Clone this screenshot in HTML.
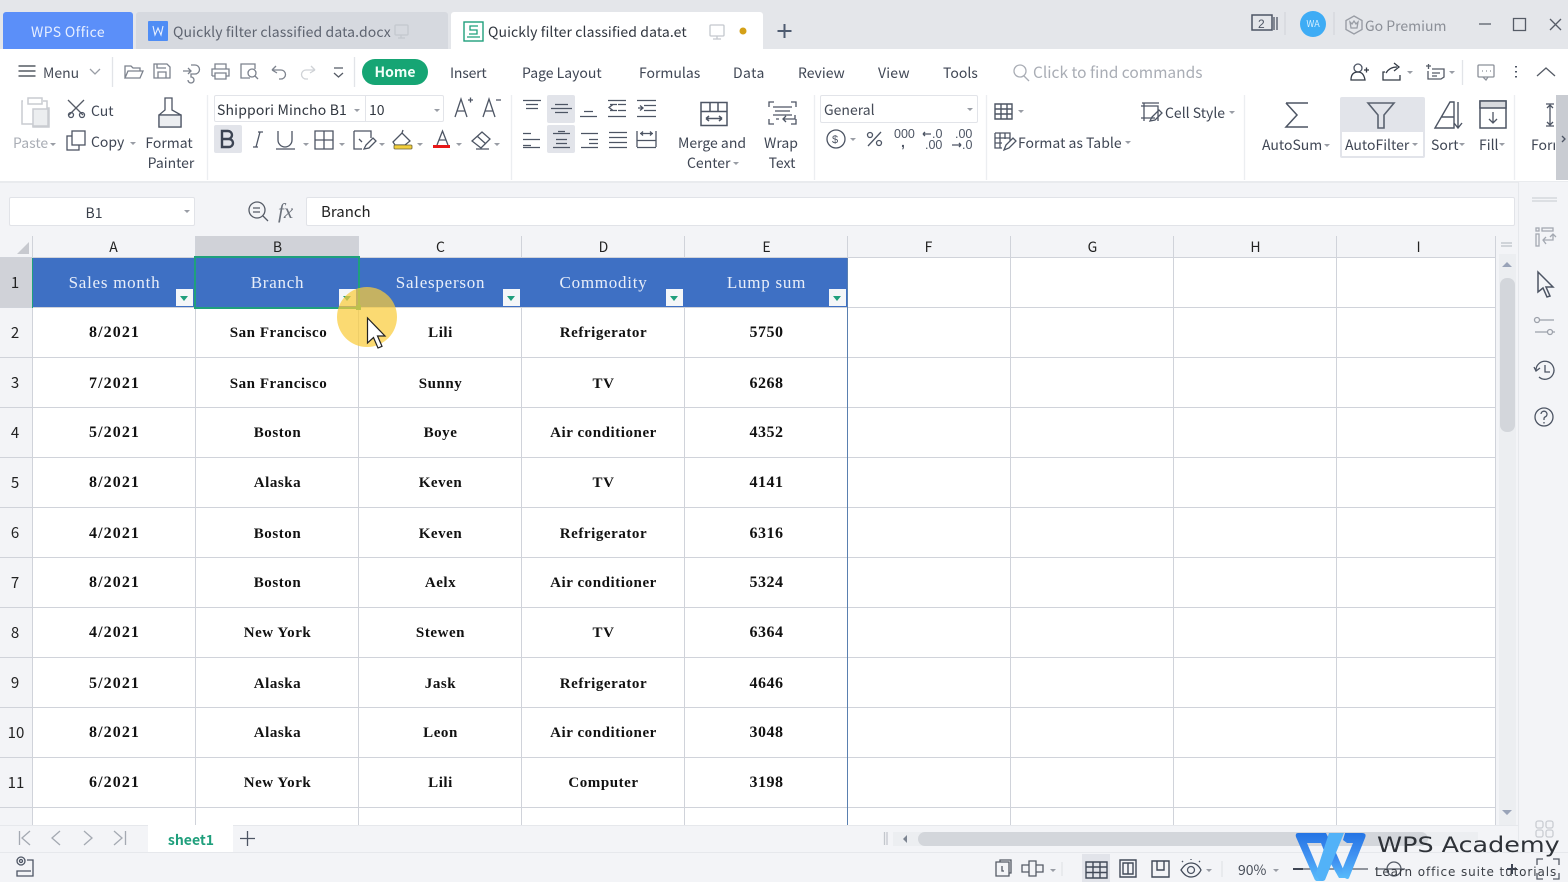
<!DOCTYPE html>
<html><head><meta charset="utf-8"><title>WPS Spreadsheet</title>
<style>
html,body{margin:0;padding:0;width:1568px;height:882px;overflow:hidden;background:#fff}
body{position:relative;font-family:"Noto Sans CJK SC","Liberation Sans",sans-serif;color:#3f4654;font-size:14px}
.a{position:absolute}
.t{position:absolute;white-space:nowrap;line-height:20px;height:20px}
.c{text-align:center;transform:translateX(-50%)}
.g{color:#a9adb5}
.hl{position:absolute;left:0;width:1495px;height:1px;background:#d0d3da}
.vl{position:absolute;top:236px;width:1px;height:589px;background:#d0d3da}
.ch{position:absolute;top:237px;height:21px;line-height:21px;width:163px;text-align:center;color:#222;font-size:14px}
.rh{position:absolute;left:0;width:32px;height:50px;line-height:50px;text-align:center;color:#222;font-size:15px}
.s{position:absolute;width:163px;height:20px;line-height:20px;margin-top:1px;text-align:center;font-family:"Liberation Serif",serif;font-weight:bold;font-size:15px;letter-spacing:.55px;color:#111}
.d{font-size:16px;letter-spacing:1.1px}
.n{font-size:16px;letter-spacing:.5px}
.h{position:absolute;top:273px;width:163px;height:20px;line-height:20px;text-align:center;font-family:"Liberation Serif",serif;font-size:17px;letter-spacing:.75px;color:#e8eef9}
.f{position:absolute;top:289px;width:17px;height:17px;background:#f4f6f8}
.f:after{content:"";position:absolute;left:4px;top:7px;border-left:4.500px solid transparent;border-right:4.500px solid transparent;border-top:5px solid #1f9f7c}
svg{position:absolute;left:0;top:0;overflow:visible}
</style></head><body>

<!-- backgrounds -->
<div class="a" style="left:0;top:0;width:1568px;height:49px;background:#e4e6ea"></div>
<div class="a" style="left:3px;top:12px;width:130px;height:37px;background:#5b8ff9;border-radius:3px 3px 0 0"></div>
<div class="a" style="left:136px;top:12px;width:312px;height:37px;background:#d6d9df;border-radius:3px 3px 0 0"></div>
<div class="a" style="left:451px;top:12px;width:312px;height:37px;background:#fff;border-radius:3px 3px 0 0"></div>
<div class="a" style="left:0;top:182px;width:1568px;height:54px;background:#f3f4f7"></div>
<div class="a" style="left:0;top:181px;width:1568px;height:2px;background:#e9ebee"></div>
<div class="a" style="left:0;top:236px;width:32px;height:589px;background:#f3f4f7"></div>
<div class="a" style="left:32px;top:236px;width:1463px;height:21px;background:#f3f4f7"></div>

<!-- tabs text -->
<div class="t c" style="left:68px;top:22px;color:#e6eeff;letter-spacing:.35px">WPS Office</div>
<div class="t" style="left:173px;top:22px;color:#5e6470;letter-spacing:.11px">Quickly filter classified data.docx</div>
<div class="t" style="left:488px;top:22px;color:#30363f;letter-spacing:.1px">Quickly filter classified data.et</div>
<div class="t" style="left:1365px;top:16px;color:#8b8f97">Go Premium</div>
<div class="a" style="left:1300px;top:11px;width:26px;height:26px;border-radius:50%;background:#3eacf5;color:#d9f0ff;font-size:9px;line-height:26px;text-align:center">WA</div>

<!-- menu row -->
<div class="t" style="left:43px;top:63px;color:#454b57">Menu</div>
<div class="a" style="left:362px;top:59px;width:66px;height:26px;border-radius:13px;background:#16a574;color:#f2fff9;font-weight:bold;line-height:26px;text-align:center;font-size:14px">Home</div>
<div class="t" style="left:450px;top:63px;letter-spacing:-.2px">Insert</div>
<div class="t" style="left:522px;top:63px">Page Layout</div>
<div class="t" style="left:639px;top:63px">Formulas</div>
<div class="t" style="left:733px;top:63px;letter-spacing:.4px">Data</div>
<div class="t" style="left:798px;top:63px">Review</div>
<div class="t" style="left:878px;top:63px;letter-spacing:.2px">View</div>
<div class="t" style="left:943px;top:63px">Tools</div>
<div class="t g" style="left:1033px;top:62px;font-size:15.500px">Click to find commands</div>

<!-- ribbon highlights -->
<div class="a" style="left:547px;top:95px;width:28px;height:28px;background:#e2e4ea;border-radius:2px"></div>
<div class="a" style="left:547px;top:125px;width:28px;height:28px;background:#e2e4ea;border-radius:2px"></div>
<div class="a" style="left:214px;top:125px;width:28px;height:28px;background:#e2e4ea;border-radius:2px"></div>
<div class="a" style="left:1340px;top:97px;width:85px;height:61px;background:#e2e4ea;border-radius:2px"></div>
<div class="a" style="left:1342px;top:132px;width:81px;height:24px;background:#fff"></div>
<div class="a" style="left:214px;top:95px;width:230px;height:27px;box-sizing:border-box;border:1px solid #e2e4e9;border-radius:2px"></div>
<div class="a" style="left:365px;top:95px;width:1px;height:27px;background:#e2e4e9"></div>
<div class="a" style="left:820px;top:95px;width:158px;height:28px;box-sizing:border-box;border:1px solid #e2e4e9;border-radius:2px"></div>

<!-- ribbon text -->
<div class="t g" style="left:13px;top:133px">Paste</div>
<div class="t" style="left:91px;top:101px">Cut</div>
<div class="t" style="left:91px;top:132px">Copy</div>
<div class="t c" style="left:169px;top:133px">Format</div>
<div class="t c" style="left:171px;top:153px">Painter</div>
<div class="t" style="left:217px;top:100px;color:#30363f;letter-spacing:.17px">Shippori Mincho B1</div>
<div class="t" style="left:369px;top:100px;color:#30363f">10</div>
<div class="t c" style="left:712px;top:133px">Merge and</div>
<div class="t" style="left:687px;top:153px">Center</div>
<div class="t c" style="left:781px;top:133px">Wrap</div>
<div class="t c" style="left:782px;top:153px">Text</div>
<div class="t" style="left:824px;top:100px;color:#454b57">General</div>
<div class="t" style="left:1165px;top:103px">Cell Style</div>
<div class="t" style="left:1018px;top:133px">Format as Table</div>
<div class="t" style="left:1262px;top:135px">AutoSum</div>
<div class="t" style="left:1345px;top:135px">AutoFilter</div>
<div class="t" style="left:1431px;top:135px">Sort</div>
<div class="t" style="left:1479px;top:135px">Fill</div>
<div class="t" style="left:1531px;top:135px;width:24px;overflow:hidden">Format</div>
<div class="a" style="left:1556px;top:95px;width:12px;height:85px;background:#c9ccd2"></div>

<!-- formula bar -->
<div class="a" style="left:9px;top:197px;width:186px;height:29px;box-sizing:border-box;background:#fff;border:1px solid #e1e3e8;border-radius:2px"></div>
<div class="t c" style="left:94px;top:203px;color:#3a404b">B1</div>
<div class="a" style="left:306px;top:197px;width:1209px;height:29px;box-sizing:border-box;background:#fff;border:1px solid #e1e3e8;border-radius:2px"></div>
<div class="t" style="left:321px;top:202px;font-size:15px;color:#222">Branch</div>

<!-- grid -->
<div class="a" style="left:32px;top:258px;width:815px;height:50px;background:#3e70c4"></div>
<div class="a" style="left:0;top:258px;width:32px;height:50px;background:#d0d2d8"></div>
<div class="a" style="left:195px;top:236px;width:164px;height:21px;background:#d0d2d8"></div>

<div class="hl" style="top:257px"></div><div class="hl" style="top:307px"></div><div class="hl" style="top:357px"></div><div class="hl" style="top:407px"></div><div class="hl" style="top:457px"></div><div class="hl" style="top:507px"></div><div class="hl" style="top:557px"></div><div class="hl" style="top:607px"></div><div class="hl" style="top:657px"></div><div class="hl" style="top:707px"></div><div class="hl" style="top:757px"></div><div class="hl" style="top:807px"></div>
<div class="vl" style="left:32px"></div><div class="vl" style="left:195px"></div><div class="vl" style="left:358px"></div><div class="vl" style="left:521px"></div><div class="vl" style="left:684px"></div><div class="vl" style="left:847px"></div><div class="vl" style="left:1010px"></div><div class="vl" style="left:1173px"></div><div class="vl" style="left:1336px"></div><div class="vl" style="left:1495px"></div>
<div class="a" style="left:32px;top:258px;width:815px;height:49px;background:#3e70c4"></div>
<div class="a" style="left:32px;top:258px;width:1px;height:50px;background:#1fa07c"></div>
<div class="a" style="left:847px;top:258px;width:1px;height:567px;background:#5a80b0"></div>

<div class="ch" style="left:32px">A</div><div class="ch" style="left:196px">B</div><div class="ch" style="left:359px">C</div><div class="ch" style="left:522px">D</div><div class="ch" style="left:685px">E</div><div class="ch" style="left:847px">F</div><div class="ch" style="left:1011px">G</div><div class="ch" style="left:1174px">H</div><div class="ch" style="left:1337px">I</div>

<div class="rh" style="top:258px;left:-1px">1</div><div class="rh" style="top:308px;left:-1px">2</div><div class="rh" style="top:358px;left:-1px">3</div><div class="rh" style="top:408px;left:-1px">4</div><div class="rh" style="top:458px;left:-1px">5</div><div class="rh" style="top:508px;left:-1px">6</div><div class="rh" style="top:558px;left:-1px">7</div><div class="rh" style="top:608px;left:-1px">8</div><div class="rh" style="top:658px;left:-1px">9</div><div class="rh" style="top:708px">10</div><div class="rh" style="top:758px">11</div>

<div class="h" style="left:33px">Sales month</div><div class="h" style="left:196px">Branch</div><div class="h" style="left:359px">Salesperson</div><div class="h" style="left:522px">Commodity</div><div class="h" style="left:685px">Lump sum</div>
<div class="f" style="left:176px"></div><div class="f" style="left:339px"></div><div class="f" style="left:503px"></div><div class="f" style="left:666px"></div><div class="f" style="left:829px"></div>

<div class="s d" style="left:33px;top:322px">8/2021</div><div class="s" style="left:197px;top:322px">San Francisco</div><div class="s" style="left:359px;top:322px">Lili</div><div class="s" style="left:522px;top:322px">Refrigerator</div><div class="s n" style="left:685px;top:322px">5750</div>
<div class="s d" style="left:33px;top:373px">7/2021</div><div class="s" style="left:197px;top:373px">San Francisco</div><div class="s" style="left:359px;top:373px">Sunny</div><div class="s" style="left:522px;top:373px">TV</div><div class="s n" style="left:685px;top:373px">6268</div>
<div class="s d" style="left:33px;top:422px">5/2021</div><div class="s" style="left:196px;top:422px">Boston</div><div class="s" style="left:359px;top:422px">Boye</div><div class="s" style="left:522px;top:422px">Air conditioner</div><div class="s n" style="left:685px;top:422px">4352</div>
<div class="s d" style="left:33px;top:472px">8/2021</div><div class="s" style="left:196px;top:472px">Alaska</div><div class="s" style="left:359px;top:472px">Keven</div><div class="s" style="left:522px;top:472px">TV</div><div class="s n" style="left:685px;top:472px">4141</div>
<div class="s d" style="left:33px;top:523px">4/2021</div><div class="s" style="left:196px;top:523px">Boston</div><div class="s" style="left:359px;top:523px">Keven</div><div class="s" style="left:522px;top:523px">Refrigerator</div><div class="s n" style="left:685px;top:523px">6316</div>
<div class="s d" style="left:33px;top:572px">8/2021</div><div class="s" style="left:196px;top:572px">Boston</div><div class="s" style="left:359px;top:572px">Aelx</div><div class="s" style="left:522px;top:572px">Air conditioner</div><div class="s n" style="left:685px;top:572px">5324</div>
<div class="s d" style="left:33px;top:622px">4/2021</div><div class="s" style="left:196px;top:622px">New York</div><div class="s" style="left:359px;top:622px">Stewen</div><div class="s" style="left:522px;top:622px">TV</div><div class="s n" style="left:685px;top:622px">6364</div>
<div class="s d" style="left:33px;top:673px">5/2021</div><div class="s" style="left:196px;top:673px">Alaska</div><div class="s" style="left:359px;top:673px">Jask</div><div class="s" style="left:522px;top:673px">Refrigerator</div><div class="s n" style="left:685px;top:673px">4646</div>
<div class="s d" style="left:33px;top:722px">8/2021</div><div class="s" style="left:196px;top:722px">Alaska</div><div class="s" style="left:359px;top:722px">Leon</div><div class="s" style="left:522px;top:722px">Air conditioner</div><div class="s n" style="left:685px;top:722px">3048</div>
<div class="s d" style="left:33px;top:772px">6/2021</div><div class="s" style="left:196px;top:772px">New York</div><div class="s" style="left:359px;top:772px">Lili</div><div class="s" style="left:522px;top:772px">Computer</div><div class="s n" style="left:685px;top:772px">3198</div>

<!-- selection -->
<div class="a" style="left:194px;top:256px;width:166px;height:53px;box-sizing:border-box;border:2.500px solid #1fa07c"></div>
<div class="a" style="left:356px;top:305px;width:5px;height:5px;background:#1fa07c"></div>
<div class="a" style="left:337px;top:287px;width:60px;height:60px;border-radius:50%;background:rgba(250,204,60,.72)"></div>

<!-- right sidebar / scrollbars -->
<div class="a" style="left:1496px;top:236px;width:22px;height:589px;background:#f3f4f7"></div>
<div class="a" style="left:1518px;top:182px;width:50px;height:700px;background:#f3f4f7;border-left:1px solid #e6e8ec;box-sizing:border-box"></div>
<div class="a" style="left:1499px;top:254px;width:17px;height:571px;background:#eceef1"></div>
<div class="a" style="left:1500px;top:278px;width:15px;height:154px;background:#d3d6db;border-radius:7px"></div>

<!-- bottom bars -->
<div class="a" style="left:0;top:825px;width:1518px;height:27px;background:#f3f4f7;border-top:1px solid #e6e8ec;box-sizing:border-box"></div>
<div class="a" style="left:0;top:852px;width:1568px;height:30px;background:#f3f4f7;border-top:1px solid #e6e8ec;box-sizing:border-box"></div>
<div class="a" style="left:148px;top:825px;width:85px;height:27px;background:#fff"></div>
<div class="t c" style="left:191px;top:830px;color:#1f9f7c;font-weight:bold">sheet1</div>
<div class="a" style="left:893px;top:832px;width:585px;height:14px;background:#eceef1"></div>
<div class="a" style="left:918px;top:832px;width:510px;height:14px;background:#d3d6db;border-radius:7px"></div>
<div class="a" style="left:1082px;top:854px;width:28px;height:28px;background:#e2e4ea"></div>
<div class="t" style="left:1238px;top:860px;color:#4a505b">90%</div>

<!-- icons -->
<svg width="1568" height="882" viewBox="0 0 1568 882" fill="none" stroke="#4d5564" stroke-width="1.3">
  <!-- tab icons -->
  <rect x="148" y="21" width="20" height="20" rx="1" fill="#4f8df5" stroke="none"/>
  <path d="M153 26l2 9 3-7 3 7 2-9" stroke="#e8f0ff" stroke-width="1.100"/>
  <rect x="464" y="22" width="19" height="19" stroke="#1fa07c" stroke-width="1.4"/>
  <path d="M478 26h-8v4h7v4h-8M467 37h13" stroke="#1fa07c" stroke-width="1.3"/>
  <g stroke="#c4c8ce"><rect x="395" y="25" width="13" height="10" rx="1"/><path d="M401 35v3M398 38h7"/></g>
  <g stroke="#c4c8ce"><rect x="710" y="25" width="14" height="11" rx="1" fill="#fff"/><path d="M717 36v3M713 39h8"/></g>
  <circle cx="743" cy="31" r="3.5" fill="#d4a017" stroke="none"/>
  <path d="M777.500 31h14M784.500 24v14" stroke="#4e5b70" stroke-width="2"/>
  <!-- title right -->
  <rect x="1252" y="15" width="20" height="15" stroke-width="1.5"/><path d="M1274 17v13M1277 17v13" />
  <text x="1258" y="28" font-size="12" fill="#4d5564" stroke="none" font-family="Liberation Sans">2</text>
  <path d="M1285 12v23M1334 12v23" stroke="#d5d7dc"/>
  <path d="M1354 16l8 4.500v9l-8 4.500-8-4.500v-9z" stroke="#999da5" stroke-width="1.4"/><path d="M1350 22l2 2 2-3 2 3 2-2-1 6h-6z" stroke="#999da5"/>
  <path d="M1479 24h12M1513.500 18.500h12v12h-12z" stroke="#555b66" stroke-width="1.3"/>
  <path d="M1550 19l11 11M1561 19l-11 11" stroke="#555b66" stroke-width="1.3"/>
  <!-- menu -->
  <path d="M18.500 66h17M18.500 71h17M18.500 76h17" stroke="#333a45"/>
  <path d="M90 69l5 5 5-5" stroke="#9a9ea6"/>
  <path d="M112.500 57v30M354.500 57v30" stroke="#e2e4e8"/>
  <path d="M125 78V66h6l2 2h7v3M125 78l3-7h15l-3 7z" stroke="#7c828d"/>
  <path d="M154 64h13l3 3v11h-16zM158 78v-6h8v6M157 64v4h9" stroke="#7c828d"/>
  <path d="M183 71h8M188 68l3 3-3 3M191 65h4a4 4 0 0 1 0 9h-4v3a3 3 0 1 1-3 3" stroke="#7c828d"/>
  <path d="M215 69v-5h11v5M212 76v-7h17v7h-3M215 73h11v6h-11zM212 76h3" stroke="#7c828d"/>
  <path d="M250 78h-9V64h14v5M246 64v0" stroke="#7c828d"/><circle cx="252" cy="73" r="4" stroke="#7c828d"/><path d="M255 76l3 3" stroke="#7c828d"/>
  <path d="M272 70l4-4M272 70l5 3M272 70h9a4.500 4.500 0 0 1 0 9h-2" stroke="#7c828d"/>
  <path d="M315 70l-4-4M315 70l-5 3M315 70h-9a4.500 4.500 0 0 0 0 9h2" stroke="#cfd2d6"/>
  <path d="M334 68h9M334 73l4.500 4 4.500-4" stroke="#555b66"/>
  <circle cx="1020" cy="71" r="6" stroke="#a9adb5"/><path d="M1024 76l5 5" stroke="#a9adb5"/>
  <circle cx="1358" cy="68" r="4"/><path d="M1351 80c0-7 4-8 7-8s6 2 7 8zM1364 70h5M1366.500 67.500v5" stroke="#333a45"/>
  <path d="M1385 72h-2v8h17v-5M1386 73c3-5 7-6 11-6M1394 63l5 4-5 4" stroke="#333a45"/>
  <path d="M1426 66h5M1428.500 64v5M1428 71v8h13l3-2v-8h-12M1432 73h8M1432 76h5" stroke="#555b66"/>
  <path d="M1407 71l3 3 3-3zM1449 71l3 3 3-3z" fill="#999da5" stroke="none"/>
  <path d="M1462.500 60v25" stroke="#e2e4e8"/>
  <rect x="1478" y="65" width="16" height="12" rx="1" stroke="#8b9099"/><path d="M1483 77l3 3 2-3" stroke="#8b9099"/><path d="M1482 71h1M1486 71h1M1490 71h1" stroke="#8b9099"/>
  <path d="M1516 66v1.500M1516 71v1.500M1516 76v1.500" stroke="#4d5564" stroke-width="2"/>
  <path d="M1537 76l9-8 9 8" stroke="#555b66"/>
  <!-- clipboard / cut / copy / painter -->
  <g stroke="#c9ccd1" stroke-width="1.5"><path d="M23 101h-1v23h11v3h16v-19h-2v-7h-4"/><rect x="28" y="98" width="14" height="6" /><rect x="33" y="109" width="15" height="17" fill="#eceef0"/></g>
  <path d="M68 100l15 15M84 100l-15 15" stroke="#555b66"/><circle cx="71" cy="115" r="2.500"/><circle cx="82" cy="115" r="2.500"/>
  <rect x="67" y="136" width="12" height="14" /><rect x="72" y="131" width="13" height="14" fill="#fff"/>
  <path d="M165 98h7v12l9 5v12h-22v-12l6-5zM159 115h22" stroke="#4d5564"/><rect x="159" y="115" width="22" height="12" fill="#eceef1"/>
  <path d="M50 143l3 3 3-3z M130 142l3 3 3-3z M354 109l3 3 3-3z M434 109l3 3 3-3z M733 162l3 3 3-3z" fill="#999da5" stroke="none"/>
  <!-- font -->
  <path d="M455 117l6-18 6 18M457.500 111h7M468 100h5M470.500 97.500v5" stroke="#4d5564"/>
  <path d="M483 117l6-18 6 18M485.500 111h7M496 100h5" stroke="#4d5564"/>
  <path d="M222 131v16h7a4 4 0 0 0 0-8h-7h6a4 4 0 0 0 0-8z" stroke="#3c4453" stroke-width="2.400"/>
  <path d="M258 132h5M253 147h5M260 132l-4 15" stroke="#4d5564"/>
  <path d="M278 131v9a7 7 0 0 0 14 0v-9M276 149h19" stroke="#4d5564"/>
  <path d="M315 131h18v18h-18zM324 131v18M315 140h18" stroke="#4d5564"/>
  <path d="M354 131h17v7M354 131v18h8M359 139l3 3" stroke="#4d5564"/><path d="M364 149l2-4 7-7 3 3-7 7z"/>
  <path d="M393 142l9-9 8 8-5 4h-10zM402 133l1-3" stroke="#4d5564"/><rect x="394" y="145" width="18" height="4" rx="1" fill="#f2cf3c" stroke="#6b6235" stroke-width=".8"/>
  <path d="M437 145l5.500-14 5.500 14M439 140h7" stroke="#4d5564"/><rect x="433" y="145" width="17" height="3" fill="#e81818" stroke="none"/>
  <path d="M472 141l10-9 8 7-9 9zM477 136l9 8M476 149h13" stroke="#4d5564"/>
  <path d="M303 143l3 3 3-3zM339 143l3 3 3-3zM379 143l3 3 3-3zM417 143l3 3 3-3zM456 143l3 3 3-3zM494 143l3 3 3-3z" fill="#999da5" stroke="none"/>
  <!-- align -->
  <path d="M523 100.500h18M526 104.500h12M526 108.500h12M551 108.500h21M555 104.500h13M555 112.500h13M580 116.500h17M584 111.500h9" stroke="#4d5564"/>
  <path d="M610 104.500h7M610 110.500h7M608 116.500h18M608 100.500h18M618 104.500h8M618 110.500h8M613 104.500l-4 3 4 3" stroke="#4d5564"/>
  <path d="M637 100.500h19M644 105.500h12M644 110.500h12M637 116.500h19M638 108h4M640 105.500l3 2.500-3 2.500" stroke="#4d5564"/>
  <path d="M523 133.500h8M523 139.500h17M523 145.500h8M523 147.500h17" stroke="#4d5564"/>
  <path d="M553 133.500h17M556 139.500h11M553 147.500h17M556 143.500h11M558 131.500h7" stroke="#4d5564"/>
  <path d="M581 133.500h17M589 139.500h9M581 147.500h17M589 143.500h9" stroke="#4d5564"/>
  <path d="M609 132.500h18M609 137.500h18M609 142.500h18M609 147.500h18" stroke="#4d5564"/>
  <path d="M637 131v16M656 131v16M637 140.500h19M637 147.500h19M640 133.500h13M641 133.500l2-2M641 133.500l2 2M652 133.500l-2-2M652 133.500l-2 2" stroke="#4d5564"/>
  <path d="M701 102.500h26v23h-26zM701 111.500h26M710 102.500v9M718 102.500v9M706 118.500h16M706 118.500l3-2.500M706 118.500l3 2.500M722 118.500l-3-2.500M722 118.500l-3 2.500" stroke="#4d5564" stroke-width="1.500"/>
  <path d="M769 107v-5h5M791 102h5v5M769 119v5h5M791 124h5v-5M773 107h19M775 111h15M773 115h19M795 115v4h-11M786 122l-3-3 3-3M776 119h3" stroke="#4d5564"/>
  <path d="M967 108l3 3 3-3z" fill="#999da5" stroke="none"/>
  <circle cx="836" cy="139" r="9" stroke="#4d5564"/><text x="832" y="143" font-size="11" fill="#4d5564" stroke="none" font-family="Liberation Sans">$</text>
  <path d="M850 138l3 3 3-3z" fill="#999da5" stroke="none"/>
  <path d="M868 146l13-14" stroke="#4d5564"/><circle cx="870" cy="135" r="2.500"/><circle cx="879" cy="143" r="2.500"/>
  <g font-family="Liberation Sans" font-size="12.500" fill="#4d5564" stroke="none">
    <text x="894" y="138">000</text><text x="901" y="147" font-weight="bold" font-size="14">,</text>
    <text x="932" y="138">.0</text><text x="925" y="149">.00</text><text x="955" y="138">.00</text><text x="962" y="149">.0</text>
  </g>
  <path d="M923 134h8M923 134l2-2M923 134l2 2M952 145h9M961 145l-2-2M961 145l-2 2" stroke="#4d5564"/>
  <!-- table icons -->
  <path d="M995 104h17v15h-17zM995 109h17M995 114h17M1001 104v15M1007 104v15" stroke="#4d5564" stroke-width="1.400"/>
  <path d="M1018 110l3 3 3-3z M1125 141l3 3 3-3zM1229 111l3 3 3-3zM1324 144l3 3 3-3zM1412 143l3 3 3-3zM1459 143l3 3 3-3zM1499 143l3 3 3-3z M184 210l3 3 3-3z" fill="#999da5" stroke="none"/>
  <path d="M995 133h15v8M995 133v15h7M995 138h15M995 143h7M1000 133v15M1005 133v6M1004 150l2-5 7-7 3 3-7 7z" stroke="#4d5564"/>
  <path d="M1144 103v18M1141 106h17v15M1141 118h14M1142 103h17" stroke="#4d5564"/><path d="M1150 121l2-4 7-7 3 3-7 7z" stroke="#4d5564"/>
  <path d="M1286 103h22M1286 103l11 12-11 12h22" stroke="#4d5564" stroke-width="1.500"/>
  <path d="M1368 103h26l-10 12v13h-6v-13z" stroke="#5a6270" stroke-width="1.600"/>
  <path d="M1435 128l15-26h4v26zM1441 117h13M1435 128h19M1458 102v25M1454 123l4 5 4-5" stroke="#4d5564" stroke-width="1.400"/>
  <rect x="1480" y="101" width="26" height="27" stroke-width="1.500"/><rect x="1480" y="101" width="26" height="7" fill="#d8dade" stroke="#4d5564" stroke-width="1.500"/><path d="M1493 112v11M1489 119l4 4 4-4"/>
  <path d="M1550 104v22M1546 104h8M1546 126h8M1547 108l3-3 3 3M1547 122l3 3 3-3" />
  <path d="M1562 136l3 3-3 3" stroke="#4d5564"/>
  <path d="M207.500 95v85M511.500 95v85M814.500 95v85M986.500 95v85M1244.500 95v85M1514.500 95v85" stroke="#eceef1"/>
  <!-- formula bar icons -->
  <circle cx="257" cy="210" r="8" stroke="#555b66"/><path d="M253 208h7M253 212h7M263 216l5 5" stroke="#555b66"/>
  <text x="278" y="218" font-family="Liberation Serif" font-style="italic" font-size="21" fill="#6b717b" stroke="none">fx</text>
  <path d="M17 254l12-12v12z" fill="#c7c9cf" stroke="none"/>
  <!-- mouse cursor -->
  <path d="M367.500 318v25l6-5.500 4.500 10.500 4-1.700-4.500-10.300h7.500z" fill="#fff" stroke="#222" stroke-width="1.200"/>
  <!-- sidebar -->
  <path d="M1532 198h25M1532 201h25" stroke="#cfd2d7"/>
  <path d="M1501 243h11M1501 246h11" stroke="#bcc0c7"/>
  <path d="M1502 267l5-5 5 5zM1502 810l5 5 5-5z" fill="#99a3b8" stroke="none"/>
  <g stroke="#a4a9b2"><rect x="1536" y="228" width="3" height="3"/><rect x="1536" y="234" width="3" height="12"/><rect x="1542" y="228" width="11" height="3"/><path d="M1553 234v6h-10M1546 244l-3-4 3-3M1550 237l3-3 3 3"/></g>
  <path d="M1538 272v20l5-4 4 9 3-1-4-9h7z" stroke="#4d5564" stroke-width="1.500"/>
  <g stroke="#9ca1aa"><circle cx="1537" cy="320" r="2.500"/><path d="M1540 320h14M1535 332h12M1555 332h-2"/><circle cx="1550" cy="332" r="2.500"/></g>
  <path d="M1536 371a9 9 0 1 1 3 6M1534 367l2 4 4-3M1545 365v7h5" stroke="#4d5564"/>
  <circle cx="1544" cy="417" r="9" stroke="#4d5564"/><path d="M1541 414a3 3 0 1 1 4 3c-1 .5-1 1-1 3M1544 422v1.500" stroke="#4d5564"/>
  <!-- sheet nav -->
  <path d="M19.500 831v14M30 831l-8 7 8 7M60 831l-8 7 8 7M84 831l8 7-8 7M114 831l8 7-8 7M125.500 831v14" stroke="#a4a9b2"/>
  <path d="M240 838.500h15M247.500 831v15" stroke="#4d5564"/>
  <path d="M884.500 832v13M887 832v13" stroke="#c3c7cd"/>
  <path d="M907 835l-4 4 4 4z" fill="#7c8491" stroke="none"/>
  <g stroke="#c9ccd2"><rect x="1536" y="821" width="7" height="7" rx="2"/><rect x="1546" y="821" width="7" height="7" rx="2"/><rect x="1536" y="830" width="7" height="7" rx="2"/><rect x="1546" y="830" width="7" height="7" rx="2"/></g>
  <!-- status -->
  <circle cx="21" cy="861" r="4" stroke="#4d5564"/><circle cx="21" cy="861" r="1.500"/><path d="M27 860h6v16H17v-5h14" stroke="#4d5564"/>
  <path d="M996 862h13v14h-13zM1000 862v-2h11v13h-2M1002 866v5h2" stroke="#555b66"/>
  <path d="M1022 865h7v-4h7v4h7v7h-7v4h-7v-4h-7zM1029 865v7M1036 865v7" stroke="#555b66"/>
  <path d="M1050 869l3 3 3-3zM1206 869l3 3 3-3zM1273 869l3 3 3-3z" fill="#999da5" stroke="none"/>
  <path d="M1062 862v14M1222 861v16" stroke="#e2e4e8"/>
  <path d="M1086 862h21v16h-21zM1086 867h21M1086 872.500h21M1093 862v16M1100 862v16" stroke="#414958" stroke-width="1.400"/>
  <path d="M1120 860h16v17h-16zM1123 863h10v11h-10zM1128 863v11" stroke="#414958" stroke-width="1.400"/>
  <path d="M1152 861h17v16h-17zM1157 861v9h7v-9" stroke="#414958" stroke-width="1.400"/>
  <path d="M1181 870c4-6 7-7 10-7s7 1 10 7c-3 6-7 7-10 7s-6-1-10-7z" stroke="#414958"/><circle cx="1191" cy="870" r="3.500"/><path d="M1191 860v-1M1183 862l-1-1M1199 862l1-1"/>
  <path d="M1293 869h10" stroke="#3f4654" stroke-width="2"/>
  <path d="M1303 869h65M1375 869h30" stroke="#555b66"/>
  <circle cx="1394" cy="869" r="7" stroke="#555b66"/>
  <path d="M1507 869h10M1512 864v10" stroke="#3f4654" stroke-width="2"/>
  <path d="M1537 866v-6h6M1559 866v-6h-6M1537 874v6h6M1559 874v6h-6" stroke="#555b66" transform="translate(0 -1)"/>
  <!-- WPS logo -->
  <defs><linearGradient id="lg" x1="0" y1="0" x2="0" y2="1"><stop offset="0" stop-color="#2474e4"/><stop offset=".45" stop-color="#3f8ff0"/><stop offset="1" stop-color="#58bcfb"/></linearGradient></defs>
  <path d="M1298 833H1326L1331 843 1326 856 1321 843H1307L1323 881H1317Q1315 881 1314 878L1296 837Q1295 833 1298 833Z" fill="url(#lg)" stroke="none"/>
  <path d="M1333 846L1347 878H1339L1327 857Z" fill="url(#lg)" stroke="none"/>
  <path d="M1345 833H1362Q1367 833 1365 838L1349 878Q1348 880 1345 878L1342 870 1353 843H1347L1343 840Z" fill="url(#lg)" stroke="none"/>
  <path d="M1329 833H1344L1325 880Q1323 882 1319 880L1316 873Z" fill="#52b2f8" stroke="none"/>
</svg>
<div class="t" style="left:1377px;top:832px;height:26px;line-height:26px;font-size:21px;font-family:'DejaVu Sans',sans-serif;font-weight:normal;color:#2e3238;transform-origin:0 50%;transform:scaleX(1.21)">WPS Academy</div>
<div class="t" style="left:1375px;top:862px;font-size:12px;letter-spacing:.9px;font-family:'DejaVu Sans',sans-serif;color:#3a3e45">Learn office suite tutorials</div>
</body></html>
